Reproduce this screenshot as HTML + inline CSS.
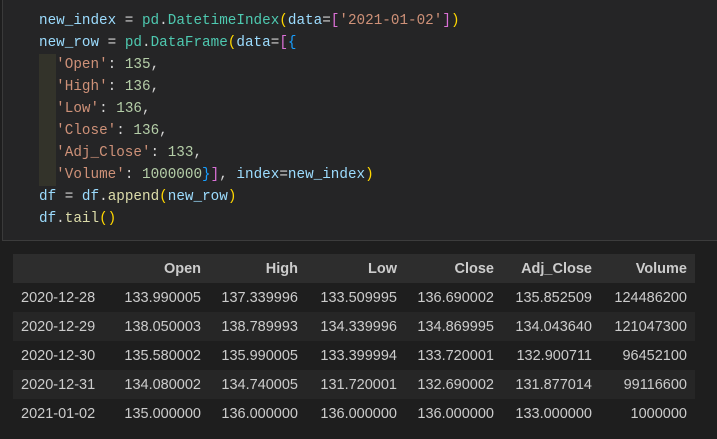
<!DOCTYPE html>
<html><head><style>
body{margin:0;width:717px;height:439px;background:#1e1e1e;overflow:hidden;position:relative;font-family:"Liberation Sans",sans-serif}
.code{position:absolute;left:2px;top:0;width:715px;height:240px;background:#252526;border-left:1px solid #3a3a3a;border-bottom:1px solid #3c3c3c}
.ln{position:absolute;left:39px;font-family:"Liberation Mono",monospace;font-size:14.3px;white-space:pre;color:#d4d4d4;line-height:22px}
.v{color:#9cdcfe}.f{color:#4ec9b0}.y{color:#ffd700}.p{color:#da70d6}.s{color:#ce9178}.n{color:#b5cea8}.fn{color:#dcdcaa}.b{color:#179fff}
.guide{position:absolute;left:39px;top:54px;width:17px;height:132px;background:#33332a}
table{position:absolute;left:13px;top:254px;border-collapse:collapse;font-size:14.5px;color:#cccccc}
td,th{height:29px;padding:0 8px 0 8px;text-align:right;white-space:nowrap}
th{background:#2d2d2d;font-weight:bold}
tr.o td{background:#262626}
</style></head><body>
<div class="code"></div>
<div class="guide"></div>
<div class="ln" style="top:10px"><span class="v">new_index</span> = <span class="f">pd</span>.<span class="f">DatetimeIndex</span><span class="y">(</span><span class="v">data</span>=<span class="p">[</span><span class="s">'2021-01-02'</span><span class="p">]</span><span class="y">)</span></div>
<div class="ln" style="top:32px"><span class="v">new_row</span> = <span class="f">pd</span>.<span class="f">DataFrame</span><span class="y">(</span><span class="v">data</span>=<span class="p">[</span><span class="b">{</span></div>
<div class="ln" style="top:54px">  <span class="s">'Open'</span>: <span class="n">135</span>,</div>
<div class="ln" style="top:76px">  <span class="s">'High'</span>: <span class="n">136</span>,</div>
<div class="ln" style="top:98px">  <span class="s">'Low'</span>: <span class="n">136</span>,</div>
<div class="ln" style="top:120px">  <span class="s">'Close'</span>: <span class="n">136</span>,</div>
<div class="ln" style="top:142px">  <span class="s">'Adj_Close'</span>: <span class="n">133</span>,</div>
<div class="ln" style="top:164px">  <span class="s">'Volume'</span>: <span class="n">1000000</span><span class="b">}</span><span class="p">]</span>, <span class="v">index</span>=<span class="v">new_index</span><span class="y">)</span></div>
<div class="ln" style="top:186px"><span class="v">df</span> = <span class="v">df</span>.<span class="fn">append</span><span class="y">(</span><span class="v">new_row</span><span class="y">)</span></div>
<div class="ln" style="top:208px"><span class="v">df</span>.<span class="fn">tail</span><span class="y">()</span></div>
<table>
<tr><th style="width:84px"></th><th style="width:80px">Open</th><th style="width:81px">High</th><th style="width:83px">Low</th><th style="width:81px">Close</th><th style="width:82px">Adj_Close</th><th style="width:79px">Volume</th></tr>
<tr><td style="text-align:left">2020-12-28</td><td>133.990005</td><td>137.339996</td><td>133.509995</td><td>136.690002</td><td>135.852509</td><td>124486200</td></tr>
<tr class="o"><td style="text-align:left">2020-12-29</td><td>138.050003</td><td>138.789993</td><td>134.339996</td><td>134.869995</td><td>134.043640</td><td>121047300</td></tr>
<tr><td style="text-align:left">2020-12-30</td><td>135.580002</td><td>135.990005</td><td>133.399994</td><td>133.720001</td><td>132.900711</td><td>96452100</td></tr>
<tr class="o"><td style="text-align:left">2020-12-31</td><td>134.080002</td><td>134.740005</td><td>131.720001</td><td>132.690002</td><td>131.877014</td><td>99116600</td></tr>
<tr><td style="text-align:left">2021-01-02</td><td>135.000000</td><td>136.000000</td><td>136.000000</td><td>136.000000</td><td>133.000000</td><td>1000000</td></tr>
</table>
</body></html>
